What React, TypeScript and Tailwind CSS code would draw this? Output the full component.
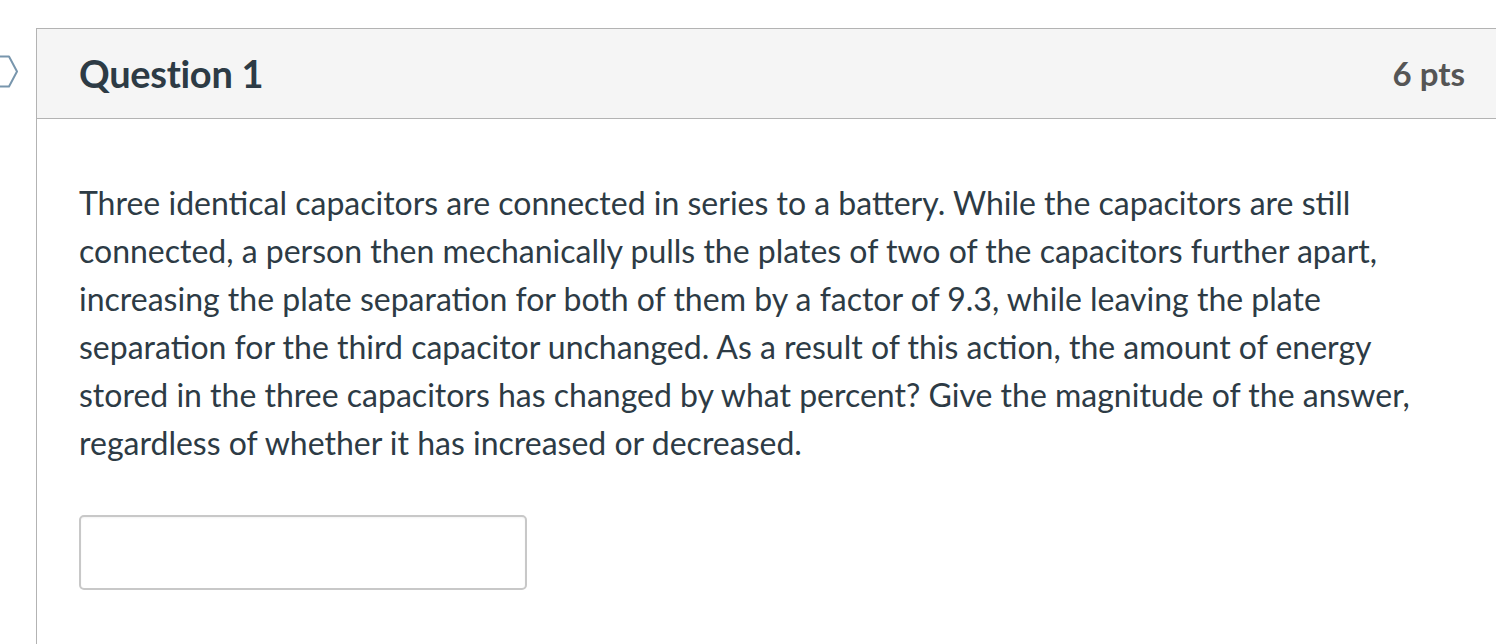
export default function App() {
  return (
    <div className="relative h-[644px] w-[1496px] overflow-hidden bg-white font-['Lato',sans-serif] text-[#2d3b45]">
      <svg className="absolute left-[-8px] top-[55px]" width="28" height="33" viewBox="0 0 28 33" fill="none">
        <path d="M1 1.5 H17 L25 16.5 L17 31.5 H1 Z" stroke="#7896ad" strokeWidth="2" strokeLinejoin="round" />
      </svg>
      <div className="ml-[36px] mt-[28px] border-l border-t border-[#b3b3b3]">
        <div className="flex h-[90px] items-center justify-between border-b border-[#b3b3b3] bg-[#f5f5f5] pl-[42px] pr-[31px]">
          <h2 className="text-[38px] font-bold tracking-[-0.3px]">Question 1</h2>
          <span className="text-[33px] font-bold text-[#555]">6 pts</span>
        </div>
        <div className="pl-[42px] pr-[42px] pb-[60px] pt-[60px]">
          <p className="text-[32px] leading-[48px]">
            Three identical capacitors are connected in series to a battery. While the capacitors are still connected, a person then mechanically pulls the plates of two of the capacitors further apart, increasing the plate separation for both of them by a factor of 9.3, while leaving the plate separation for the third capacitor unchanged. As a result of this action, the amount of energy stored in the three capacitors has changed by what percent? Give the magnitude of the answer, regardless of whether it has increased or decreased.
          </p>
          <div className="mt-[48px] h-[75px] w-[448px] rounded-[5px] border-2 border-[#c8c8c8] shadow-[inset_0_1px_2px_rgba(0,0,0,0.05)]" />
        </div>
      </div>
    </div>
  );
}
